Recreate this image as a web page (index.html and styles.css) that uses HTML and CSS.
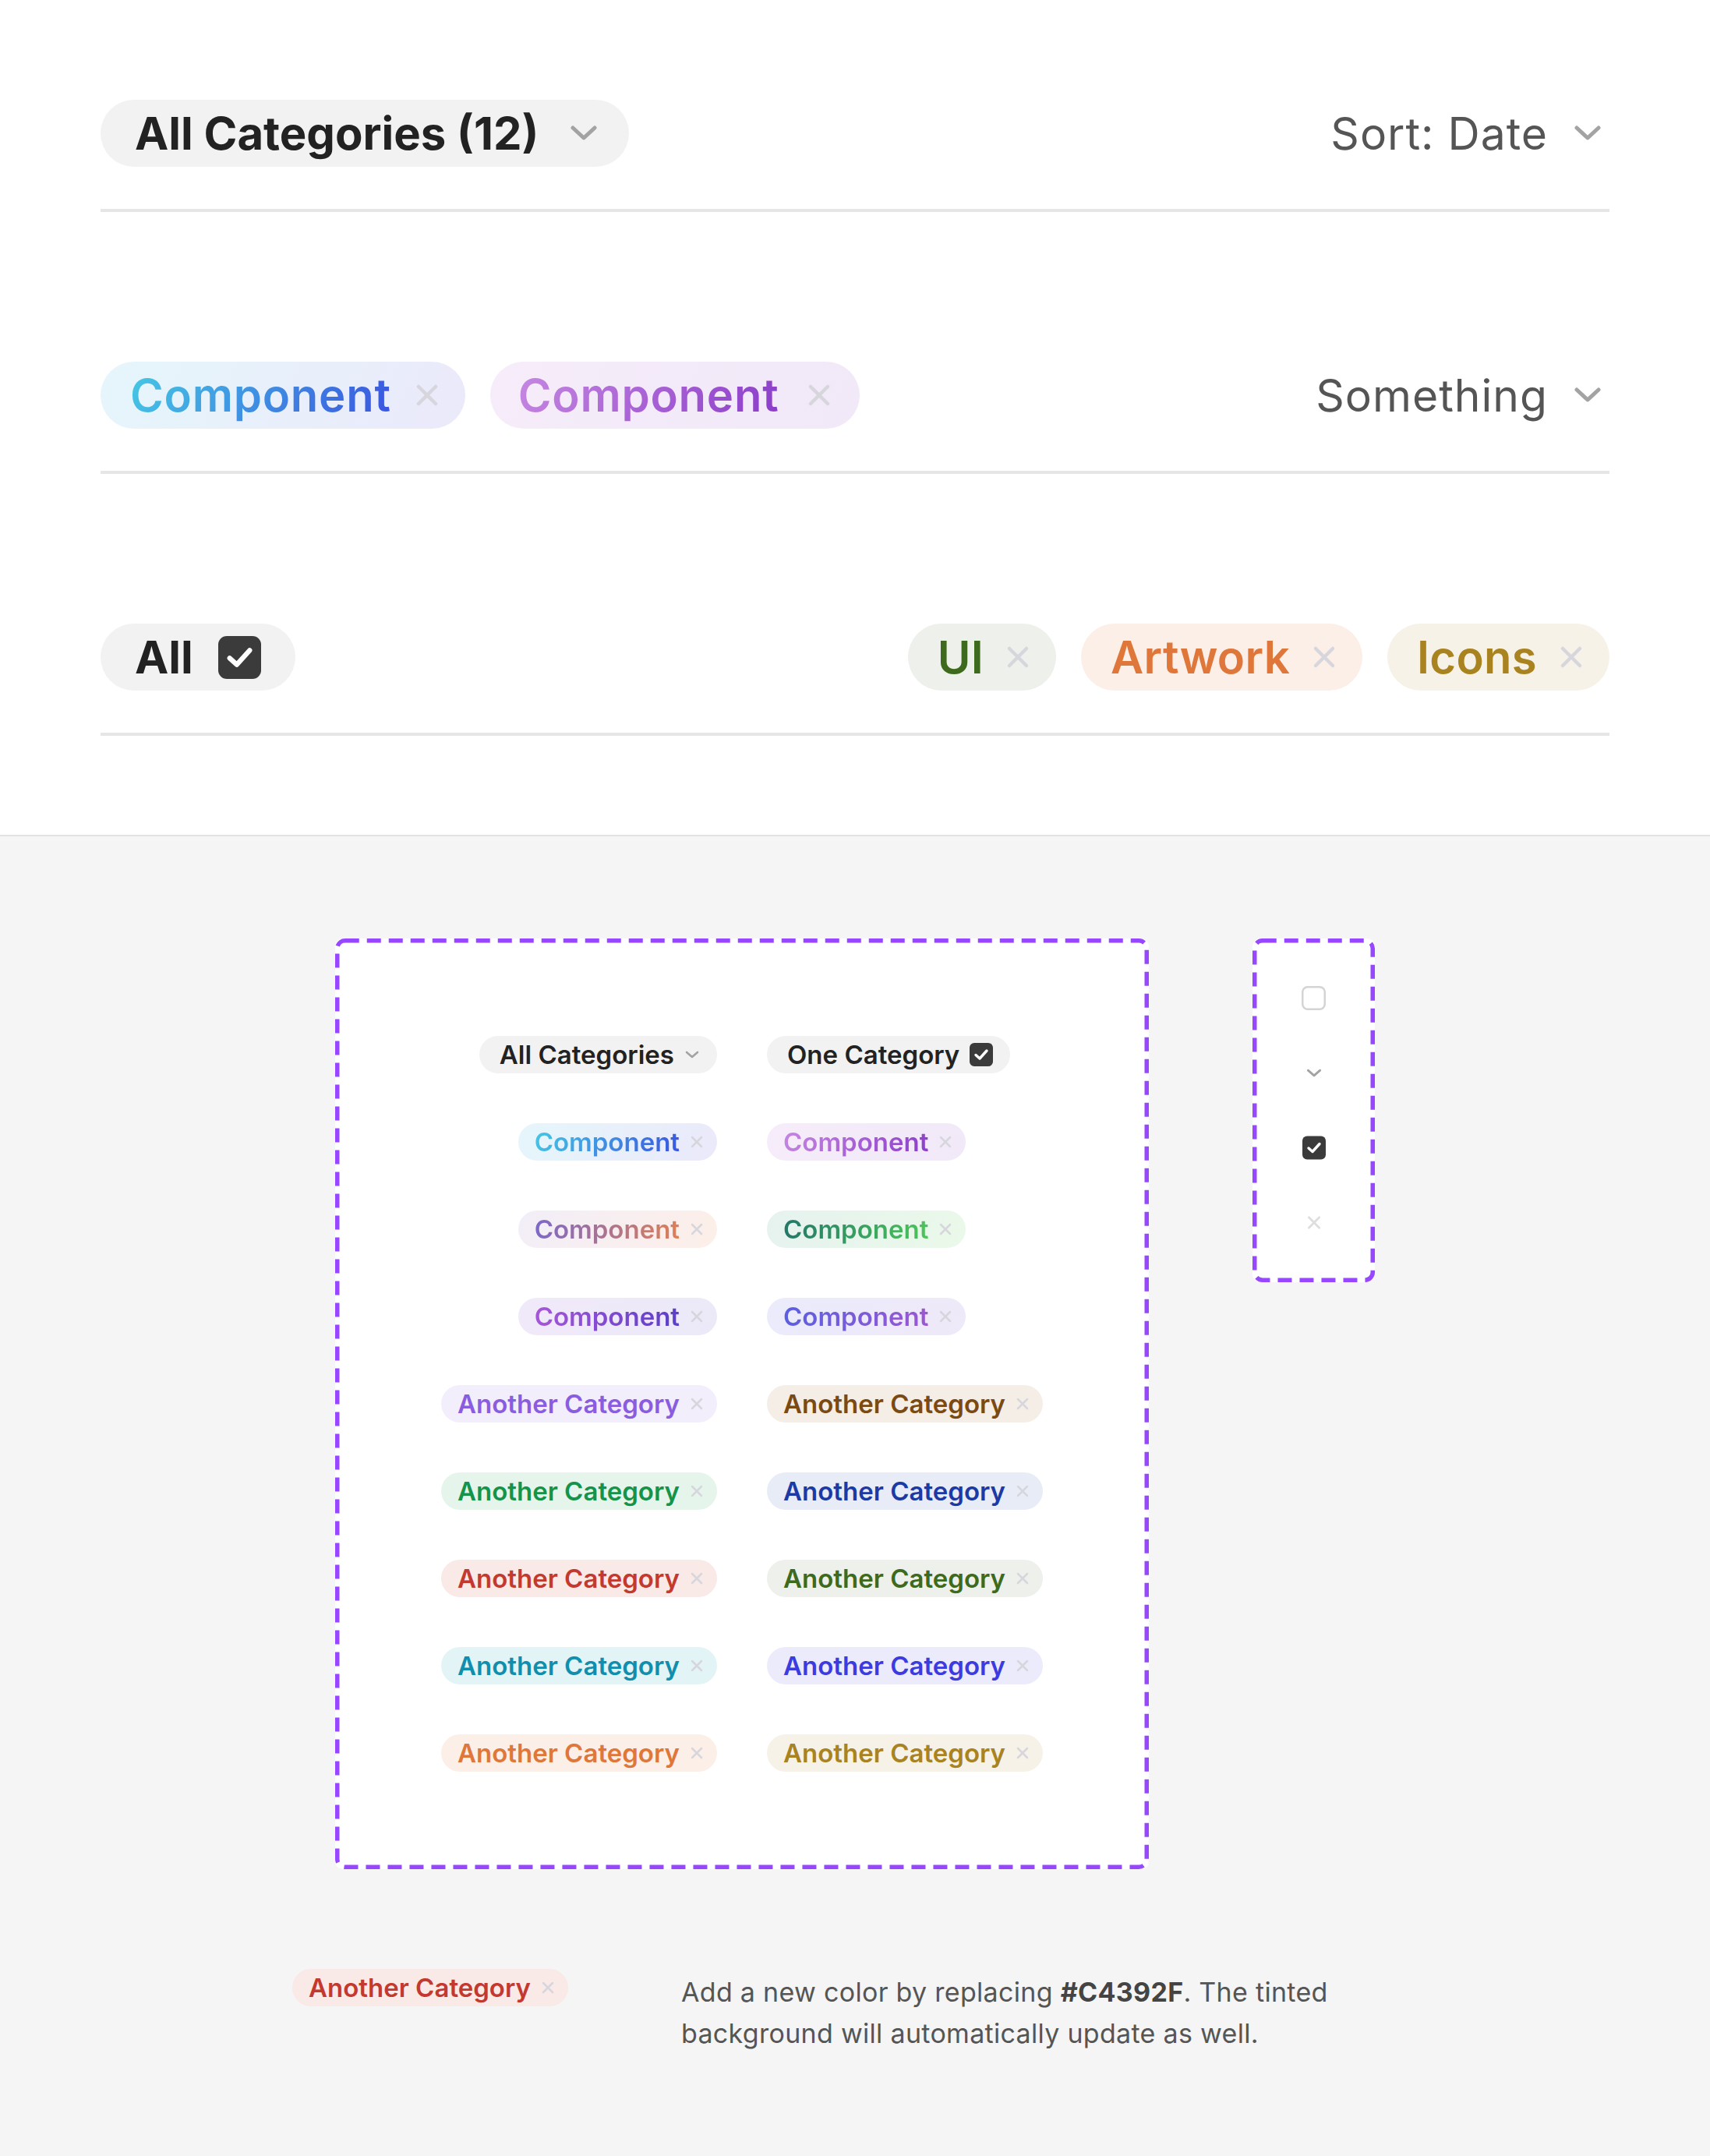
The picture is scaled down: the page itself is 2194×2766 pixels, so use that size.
FILE: index.html
```html
<!DOCTYPE html>
<html lang="en">
    <head>
        <meta charset="UTF-8">
        <meta name="viewport" content="width=device-width, initial-scale=1.0">
        <title>Category Tags</title>
        <link rel="stylesheet" href="styles.css">
    </head>

    <body>
        <div class="preview">
            <div class="row">
                <div class="tag tag-lg tag-gray tag-strong">
                    <span>All Categories (12)</span>
                    <svg class="chev-lg" viewBox="0 0 36 22"><path d="M4 4 L18 17 L32 4"/></svg>
                </div>
                <div class="select">
                    <span>Sort: Date</span>
                    <svg class="chev-lg" viewBox="0 0 36 22"><path d="M4 4 L18 17 L32 4"/></svg>
                </div>
            </div>

            <div class="row">
                <div class="tags">
                    <div class="tag tag-lg bg-sky">
                        <span class="grad txt-sky">Component</span>
                        <svg class="x-lg" viewBox="0 0 32 32"><path d="M5 5 L27 27 M27 5 L5 27"/></svg>
                    </div>
                    <div class="tag tag-lg bg-orchid tag-wide">
                        <span class="grad txt-orchid">Component</span>
                        <svg class="x-lg" viewBox="0 0 32 32"><path d="M5 5 L27 27 M27 5 L5 27"/></svg>
                    </div>
                </div>
                <div class="select">
                    <span>Something</span>
                    <svg class="chev-lg" viewBox="0 0 36 22"><path d="M4 4 L18 17 L32 4"/></svg>
                </div>
            </div>

            <div class="row last">
                <div class="tag tag-lg tag-gray tag-strong tag-all">
                    <span>All</span>
                    <svg class="check-lg" viewBox="0 0 30 30"><rect width="30" height="30" rx="6"/><path d="M8 15.5 L13 20 L22 10"/></svg>
                </div>
                <div class="tags tags-flat">
                    <div class="tag tag-lg c-moss">
                        <span>UI</span>
                        <svg class="x-lg" viewBox="0 0 32 32"><path d="M5 5 L27 27 M27 5 L5 27"/></svg>
                    </div>
                    <div class="tag tag-lg c-tangerine">
                        <span>Artwork</span>
                        <svg class="x-lg" viewBox="0 0 32 32"><path d="M5 5 L27 27 M27 5 L5 27"/></svg>
                    </div>
                    <div class="tag tag-lg c-gold">
                        <span>Icons</span>
                        <svg class="x-lg" viewBox="0 0 32 32"><path d="M5 5 L27 27 M27 5 L5 27"/></svg>
                    </div>
                </div>
            </div>
        </div>

        <div class="canvas">
            <div class="frames">
                <div class="frame frame-set">
                    <svg class="dash" width="1044" height="1194"><rect x="2.75" y="2.75" width="1038.5" height="1188.5" rx="10"/></svg>
                    <div class="grid">
                        <div class="tag tag-sm tag-gray">
                            <span>All Categories</span>
                            <svg class="chev-sm" viewBox="0 0 20 12"><path d="M3 3 L10 9 L17 3"/></svg>
                        </div>
                        <div class="tag tag-sm tag-gray">
                            <span>One Category</span>
                            <svg class="check-sm" viewBox="0 0 30 30"><rect width="30" height="30" rx="6"/><path d="M8 15.5 L13 20 L22 10"/></svg>
                        </div>

                        <div class="tag tag-sm bg-sky">
                            <span class="grad txt-sky">Component</span>
                            <svg class="x-sm" viewBox="0 0 18 18"><path d="M3 3 L15 15 M15 3 L3 15"/></svg>
                        </div>
                        <div class="tag tag-sm bg-orchid">
                            <span class="grad txt-orchid">Component</span>
                            <svg class="x-sm" viewBox="0 0 18 18"><path d="M3 3 L15 15 M15 3 L3 15"/></svg>
                        </div>

                        <div class="tag tag-sm bg-dusk">
                            <span class="grad txt-dusk">Component</span>
                            <svg class="x-sm" viewBox="0 0 18 18"><path d="M3 3 L15 15 M15 3 L3 15"/></svg>
                        </div>
                        <div class="tag tag-sm bg-mint">
                            <span class="grad txt-mint">Component</span>
                            <svg class="x-sm" viewBox="0 0 18 18"><path d="M3 3 L15 15 M15 3 L3 15"/></svg>
                        </div>

                        <div class="tag tag-sm bg-grape">
                            <span class="grad txt-grape">Component</span>
                            <svg class="x-sm" viewBox="0 0 18 18"><path d="M3 3 L15 15 M15 3 L3 15"/></svg>
                        </div>
                        <div class="tag tag-sm bg-indigo">
                            <span class="grad txt-indigo">Component</span>
                            <svg class="x-sm" viewBox="0 0 18 18"><path d="M3 3 L15 15 M15 3 L3 15"/></svg>
                        </div>

                        <div class="tag tag-sm c-violet">
                            <span>Another Category</span>
                            <svg class="x-sm" viewBox="0 0 18 18"><path d="M3 3 L15 15 M15 3 L3 15"/></svg>
                        </div>
                        <div class="tag tag-sm c-brown">
                            <span>Another Category</span>
                            <svg class="x-sm" viewBox="0 0 18 18"><path d="M3 3 L15 15 M15 3 L3 15"/></svg>
                        </div>

                        <div class="tag tag-sm c-green">
                            <span>Another Category</span>
                            <svg class="x-sm" viewBox="0 0 18 18"><path d="M3 3 L15 15 M15 3 L3 15"/></svg>
                        </div>
                        <div class="tag tag-sm c-navy">
                            <span>Another Category</span>
                            <svg class="x-sm" viewBox="0 0 18 18"><path d="M3 3 L15 15 M15 3 L3 15"/></svg>
                        </div>

                        <div class="tag tag-sm c-red">
                            <span>Another Category</span>
                            <svg class="x-sm" viewBox="0 0 18 18"><path d="M3 3 L15 15 M15 3 L3 15"/></svg>
                        </div>
                        <div class="tag tag-sm c-moss">
                            <span>Another Category</span>
                            <svg class="x-sm" viewBox="0 0 18 18"><path d="M3 3 L15 15 M15 3 L3 15"/></svg>
                        </div>

                        <div class="tag tag-sm c-teal">
                            <span>Another Category</span>
                            <svg class="x-sm" viewBox="0 0 18 18"><path d="M3 3 L15 15 M15 3 L3 15"/></svg>
                        </div>
                        <div class="tag tag-sm c-blue">
                            <span>Another Category</span>
                            <svg class="x-sm" viewBox="0 0 18 18"><path d="M3 3 L15 15 M15 3 L3 15"/></svg>
                        </div>

                        <div class="tag tag-sm c-tangerine">
                            <span>Another Category</span>
                            <svg class="x-sm" viewBox="0 0 18 18"><path d="M3 3 L15 15 M15 3 L3 15"/></svg>
                        </div>
                        <div class="tag tag-sm c-gold">
                            <span>Another Category</span>
                            <svg class="x-sm" viewBox="0 0 18 18"><path d="M3 3 L15 15 M15 3 L3 15"/></svg>
                        </div>
                    </div>
                </div>

                <!-- icon parts -->
                <div class="frame frame-icons">
                    <svg class="dash" width="157" height="441"><rect x="2.75" y="2.75" width="151.5" height="435.5" rx="10"/></svg>
                    <svg class="icon box-empty" viewBox="0 0 31 31"><rect x="1.25" y="1.25" width="28.5" height="28.5" rx="6.5"/></svg>
                    <svg class="icon chev-icon" viewBox="0 0 20 12"><path d="M3 3 L10 9 L17 3"/></svg>
                    <svg class="icon check-sm" viewBox="0 0 30 30"><rect width="30" height="30" rx="6"/><path d="M8 15.5 L13 20 L22 10"/></svg>
                    <svg class="icon x-icon" viewBox="0 0 18 18"><path d="M3 3 L15 15 M15 3 L3 15"/></svg>
                </div>
            </div>

            <div class="note">
                <div class="tag tag-sm c-red">
                    <span>Another Category</span>
                    <svg class="x-sm" viewBox="0 0 18 18"><path d="M3 3 L15 15 M15 3 L3 15"/></svg>
                </div>
                <p>Add a new color by replacing <b>#C4392F</b>. The tinted<br>background will automatically update as well.</p>
            </div>
        </div>
    </body>
</html>
```

FILE: styles.css
```css
* {
    box-sizing: border-box;
    margin: 0;
    padding: 0;
    font-family: Inter, "Noto Sans", sans-serif;
}
body {
    background-color: #f5f5f5;
    min-height: 2766px;
}
svg {
    display: block;
    flex-shrink: 0;
}

/* top preview */
.preview {
    background-color: #fff;
    padding: 128px 129px 127px;
}
.row {
    display: flex;
    justify-content: space-between;
    align-items: center;
    height: 144px;
    padding-bottom: 54px;
    border-bottom: 4px solid #e6e6e6;
    margin-bottom: 192px;
}
.row.last {
    margin-bottom: 0;
}
.tags {
    display: flex;
    gap: 32px;
}
.select {
    display: flex;
    align-items: center;
    gap: 33px;
    font-size: 57px;
    color: #555;
    letter-spacing: 1px;
    padding-right: 10px;
}

/* tags */
.tag {
    display: inline-flex;
    align-items: center;
    border-radius: 999px;
    font-weight: 600;
    white-space: nowrap;
}
.tag-lg {
    height: 86px;
    padding: 0 33px 0 38px;
    gap: 30px;
    font-size: 58px;
    letter-spacing: 0.8px;
}
.tag-wide {
    padding: 0 36px 0 36px;
    gap: 36px;
}
.tags-flat .tag {
    padding: 0 33px 0 38px;
    gap: 28px;
    letter-spacing: 0.3px;
}
.tag-sm {
    height: 48px;
    padding: 0 17px 0 21px;
    gap: 13px;
    font-size: 33px;
    letter-spacing: 0;
}
.tag-strong {
    font-weight: 700;
    padding: 0 40px 0 44px;
    gap: 40px;
    letter-spacing: 0;
}
.tag-all {
    gap: 32px;
    padding-right: 44px;
}
.tag-gray {
    background-color: #f2f2f2;
    color: #222;
}
.tag-sm.tag-gray {
    padding: 0 22px 0 26px;
}

.grad {
    -webkit-background-clip: text;
    background-clip: text;
    color: transparent;
}

/* icons */
.chev-lg {
    width: 36px;
    height: 22px;
}
.chev-lg path, .chev-sm path, .chev-icon path {
    fill: none;
    stroke: #a3a3a3;
    stroke-width: 5;
    stroke-linecap: round;
    stroke-linejoin: round;
}
.chev-sm {
    width: 20px;
    height: 12px;
}
.chev-sm path, .chev-icon path {
    stroke-width: 2.6;
}
.x-lg {
    width: 32px;
    height: 32px;
}
.x-sm {
    width: 18px;
    height: 18px;
}
.x-lg path, .x-sm path, .x-icon path {
    fill: none;
    stroke: #d6d6dc;
    stroke-width: 4.5;
    stroke-linecap: round;
}
.x-sm path, .x-icon path {
    stroke-width: 2.5;
}
.check-lg {
    width: 55px;
    height: 55px;
}
.check-sm {
    width: 30px;
    height: 30px;
}
.check-lg rect, .check-sm rect {
    fill: #3b3b3b;
}
.check-lg path, .check-sm path {
    fill: none;
    stroke: #fff;
    stroke-width: 3.4;
    stroke-linecap: round;
    stroke-linejoin: round;
}
.box-empty {
    width: 31px;
}
.box-empty rect {
    fill: none;
    stroke: #d4d4d4;
    stroke-width: 2.5;
}

/* gradient colour sets */
.bg-sky { background: linear-gradient(120deg, #e5f6fb, #ebe9fa); }
.txt-sky { background-image: linear-gradient(120deg, #45c9e4, #3a52e0); }
.bg-orchid { background: linear-gradient(120deg, #f6ecfa, #f1e9f8); }
.txt-orchid { background-image: linear-gradient(120deg, #c788e2, #8a3cc8); }
.bg-dusk { background: linear-gradient(120deg, #f2eef8, #fdefe8); }
.txt-dusk { background-image: linear-gradient(90deg, #7c68c8, #dc7f56); }
.bg-mint { background: linear-gradient(120deg, #e6f2ef, #eaf9e9); }
.txt-mint { background-image: linear-gradient(90deg, #237868, #4cc45a); }
.bg-grape { background: linear-gradient(120deg, #f1e9fa, #ebe9f8); }
.txt-grape { background-image: linear-gradient(90deg, #a656d8, #5b3ec6); }
.bg-indigo { background: linear-gradient(120deg, #eaebfb, #efe9f9); }
.txt-indigo { background-image: linear-gradient(90deg, #5a5fe0, #9b58d0); }

/* flat colour sets */
.c-violet { background-color: #f3eefc; color: #8a5ce0; }
.c-brown { background-color: #f4eee7; color: #7a4a12; }
.c-green { background-color: #e6f5eb; color: #14934a; }
.c-navy { background-color: #e8ecf7; color: #1c3aa6; }
.c-red { background-color: #f9e9e7; color: #c4392f; }
.c-moss { background-color: #edf0eb; color: #3d6a1c; }
.c-teal { background-color: #e3f4f7; color: #108eae; }
.c-blue { background-color: #ebebfc; color: #3b3be0; }
.c-tangerine { background-color: #fcefe8; color: #e0773a; }
.c-gold { background-color: #f6f2e8; color: #a8831f; }

/* canvas */
.canvas {
    border-top: 2px solid #e2e2e2;
    padding-top: 131px;
}
.frames {
    display: flex;
    justify-content: center;
    align-items: flex-start;
    gap: 133px;
}
.frame {
    position: relative;
    background-color: #fff;
    border-radius: 10px;
}
.dash {
    position: absolute;
    top: 0;
    left: 0;
    pointer-events: none;
}
.dash rect {
    fill: none;
    stroke: #9747ff;
    stroke-width: 5.5;
    stroke-dasharray: 18 10;
}
.frame-set {
    width: 1044px;
    height: 1194px;
    display: flex;
    align-items: center;
}
.grid {
    width: 100%;
    display: grid;
    grid-template-columns: 1fr 1fr;
    column-gap: 64px;
    row-gap: 64px;
}
.grid > :nth-child(odd) {
    justify-self: end;
}
.grid > :nth-child(even) {
    justify-self: start;
}
.frame-icons {
    width: 157px;
    height: 441px;
    display: flex;
    flex-direction: column;
    align-items: center;
    justify-content: center;
    gap: 65px;
}
.frame-icons .icon {
    height: 31px;
}
.chev-icon {
    width: 22px;
}
.x-icon {
    width: 20px;
}
.x-icon path {
    stroke: #dedede;
}

.note {
    display: flex;
    justify-content: center;
    align-items: flex-start;
    gap: 145px;
    margin-top: 128px;
}
.note p {
    width: 945px;
    margin-top: 3px;
    font-size: 34px;
    line-height: 53px;
    color: #555;
    letter-spacing: 0.3px;
}
.note b {
    font-weight: 700;
    color: #444;
}
```
